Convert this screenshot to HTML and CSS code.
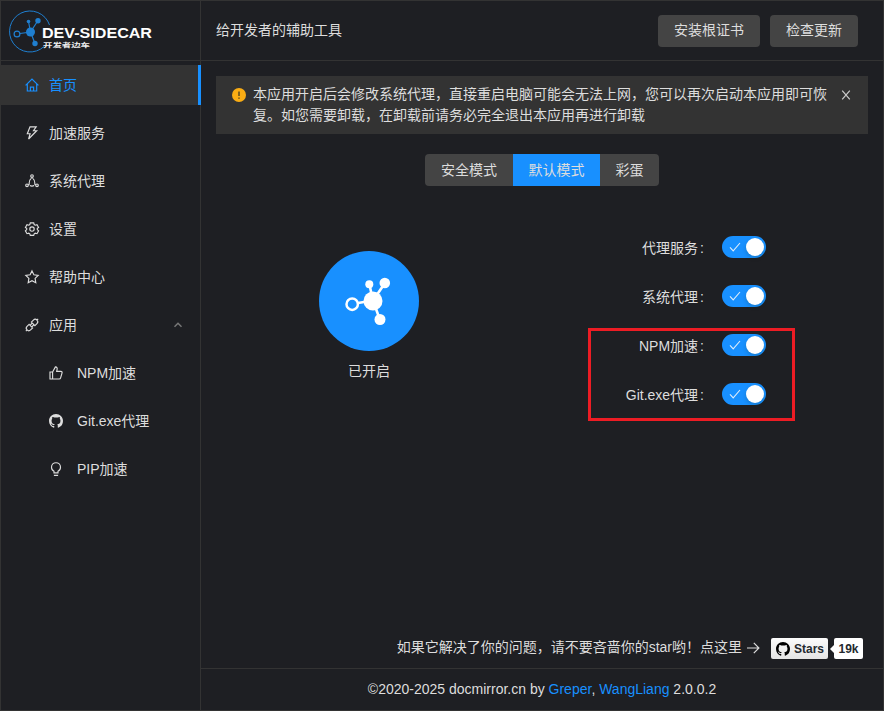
FILE: index.html
```html
<!DOCTYPE html>
<html lang="zh-CN">
<head>
<meta charset="utf-8">
<title>DEV-SIDECAR</title>
<link rel="stylesheet" href="styles.css">
</head>
<body>
<div class="app">
  <aside class="sidebar">
    <div class="brand">
      <svg class="logo" width="150" height="48" viewBox="0 0 150 48">
        <g fill="none" stroke="#1f7fd0">
          <path d="M41.500 18A20.500 20.500 0 1 0 36 39.500" stroke-width="1"/>
          <path d="M12 26.500L22.500 25L20.500 14.500M22.500 25L30 13.500M22.500 25L27 36.500" stroke-width="1.200"/>
          <circle cx="9" cy="27" r="2.900" stroke-width="1.200"/>
        </g>
        <g fill="#1f7fd0">
          <circle cx="22.500" cy="25" r="4.500"/><circle cx="20.500" cy="14.500" r="1.800"/><circle cx="30" cy="13.700" r="2.700"/><circle cx="27" cy="36.500" r="2.700"/>
        </g>
        <text class="logo-name" x="34" y="31" textLength="110" lengthAdjust="spacingAndGlyphs">DEV-SIDECAR</text>
        <text class="logo-sub" x="35" y="40.400" textLength="47" lengthAdjust="spacingAndGlyphs">开发者边车</text>
      </svg>
    </div>
    <nav class="menu">
      <a class="item active"><svg class="icon" viewBox="0 0 14 14"><path d="M.6 7.400L7 1l6.400 6.400M2.300 6v7h9.400V6M5.400 13V9.100h3.200V13"/></svg>首页</a>
      <a class="item"><svg class="icon" viewBox="0 0 14 14"><path d="M5 .8h6.200L8.500 4.700h3.200L3.600 13l1.500-5.300H2.300z"/></svg>加速服务</a>
      <a class="item"><svg class="icon" viewBox="0 0 14 14"><circle cx="7" cy="2" r="1.300"/><circle cx="2" cy="11.300" r="1.300"/><circle cx="12" cy="11.300" r="1.300"/><path d="M7 3.300v1.700M5.900 4.700C4.600 5.900 4.100 7.300 4.100 9.400M8.100 4.700c1.300 1.200 1.800 2.600 1.800 4.700M3.200 10.700l1.600-1M10.800 10.700l-1.600-1M4.800 11.500c1.400.7 3 .7 4.400 0"/></svg>系统代理</a>
      <a class="item"><svg class="icon" viewBox="0 0 14 14"><path d="M5.300.8h3.400l.5 1.800 1 .6 1.800-.5 1.600 2.800L12.300 6.400v1.200l1.300 1.300-1.600 2.800-1.800-.5-1 .6-.5 1.600H5.300l-.5-1.600-1-.6-1.800.5L.4 8.900l1.300-1.300V6.400L.4 5.500 2 2.700l1.800.5 1-.6z"/><circle cx="7" cy="7" r="2.200"/></svg>设置</a>
      <a class="item"><svg class="icon" viewBox="0 0 14 14"><path d="M7 .9l1.900 3.900 4.300.6-3.100 3 .7 4.300L7 10.700l-3.800 2 .7-4.300-3.100-3 4.300-.6z"/></svg>帮助中心</a>
      <a class="item"><svg class="icon" viewBox="0 0 14 14"><g transform="rotate(45 7 7)"><path d="M4.500 5.400V2.500a2.500 2.500 0 0 1 5 0v2.900zM4.500 8.600v2.900a2.500 2.500 0 0 0 5 0V8.600zM7 0v-1.700M7 14v1.700M5.800 5.400v3.200M8.200 5.400v3.200"/></g></svg>应用<svg class="caret" width="10" height="10" viewBox="0 0 10 10"><path d="M1.500 6.700L5 3.300l3.500 3.400"/></svg></a>
      <a class="item sub"><svg class="icon" viewBox="0 0 14 14"><path d="M1 6h2.600v7H1zM3.600 6L6.400.9c1.700 0 2 1.300 1.700 2.500L7.700 5.300h4.100c1.200 0 1.500.9 1.200 1.800l-1.400 4.700c-.2.800-.7 1.200-1.400 1.200H3.600"/></svg>NPM加速</a>
      <a class="item sub"><svg class="icon solid" viewBox="0 0 16 16"><path d="M8 0C3.580 0 0 3.580 0 8c0 3.540 2.290 6.530 5.470 7.590.4.070.55-.17.55-.38 0-.19-.01-.82-.01-1.490-2.010.37-2.530-.49-2.690-.94-.09-.23-.48-.94-.82-1.130-.28-.15-.68-.52-.01-.53.63-.01 1.080.58 1.230.82.72 1.210 1.870.87 2.330.66.070-.52.28-.87.51-1.070-1.780-.2-3.640-.89-3.640-3.950 0-.87.31-1.590.82-2.150-.08-.2-.36-1.020.08-2.120 0 0 .67-.21 2.200.82.64-.18 1.320-.27 2-.27s1.360.09 2 .27c1.530-1.040 2.200-.82 2.200-.82.44 1.100.16 1.920.08 2.120.51.56.82 1.270.82 2.150 0 3.070-1.870 3.750-3.650 3.950.29.25.54.73.54 1.480 0 1.070-.01 1.930-.01 2.200 0 .21.15.46.55.38A8.010 8.010 0 0 0 16 8c0-4.420-3.580-8-8-8z"/></svg>Git.exe代理</a>
      <a class="item sub"><svg class="icon" viewBox="0 0 14 14"><path d="M5 10.800V9.200C3.500 8.500 2.500 7 2.500 5.200a4.500 4.500 0 0 1 9 0C11.500 7 10.500 8.500 9 9.200v1.600zM4.900 13.300h4.200"/></svg>PIP加速</a>
    </nav>
  </aside>
  <div class="page">
    <header class="header">
      <span class="title">给开发者的辅助工具</span>
      <button class="btn">安装根证书</button>
      <button class="btn">检查更新</button>
    </header>
    <main class="main">
      <div class="alert">
        <svg class="warn" width="14" height="14" viewBox="0 0 14 14"><circle cx="7" cy="7" r="7" fill="#faad14"/><path d="M7 3.400v4.500M7 9.400v1.400" stroke="#5a4a22" stroke-width="1.500"/></svg>
        <p class="alert-text">本应用开启后会修改系统代理，直接重启电脑可能会无法上网，您可以再次启动本应用即可恢复。如您需要卸载，在卸载前请务必完全退出本应用再进行卸载</p>
        <svg class="close" width="10" height="10" viewBox="0 0 10 10"><path d="M1.200.6l7.600 8.800M8.800.6L1.200 9.400"/></svg>
      </div>
      <div class="modes">
        <button class="mode">安全模式</button><button class="mode on">默认模式</button><button class="mode">彩蛋</button>
      </div>
      <div class="panel">
        <div class="status">
          <svg width="100" height="100" viewBox="0 0 100 100">
            <circle cx="50" cy="50" r="50" fill="#1890ff"/>
            <g stroke="#fff" stroke-width="2.600" fill="none"><path d="M39 52L54 49.500L50.300 33M54 49.500L66 32M54 49.500L61 69"/><circle cx="33.200" cy="53.200" r="5.700" stroke-width="2.500"/></g>
            <g fill="#fff"><circle cx="54" cy="50" r="9.500"/><circle cx="50.300" cy="33.200" r="4"/><circle cx="65.800" cy="32" r="5.300"/><circle cx="61" cy="68.500" r="5.500"/></g>
          </svg>
          <span>已开启</span>
        </div>
        <div class="form">
          <div class="row"><span class="label">代理服务<i>:</i></span><span class="switch"><svg class="check" viewBox="0 0 12 12"><path d="M1 6.300l3.200 3.500L11 2"/></svg><b></b></span></div>
          <div class="row"><span class="label">系统代理<i>:</i></span><span class="switch"><svg class="check" viewBox="0 0 12 12"><path d="M1 6.300l3.200 3.500L11 2"/></svg><b></b></span></div>
          <div class="row"><span class="label">NPM加速<i>:</i></span><span class="switch"><svg class="check" viewBox="0 0 12 12"><path d="M1 6.300l3.200 3.500L11 2"/></svg><b></b></span></div>
          <div class="row"><span class="label">Git.exe代理<i>:</i></span><span class="switch"><svg class="check" viewBox="0 0 12 12"><path d="M1 6.300l3.200 3.500L11 2"/></svg><b></b></span></div>
          <div class="highlight"></div>
        </div>
      </div>
      <div class="star">
        <span class="star-text">如果它解决了你的问题，请不要吝啬你的star哟！点这里</span>
        <svg class="arrow" width="14" height="14" viewBox="0 0 14 14"><path d="M1 7h11.500M7.800 1.800L12.900 7l-5.100 5.200"/></svg>
        <span class="gh"><svg width="14" height="14" viewBox="0 0 16 16"><path d="M8 0C3.580 0 0 3.580 0 8c0 3.540 2.290 6.530 5.470 7.590.4.070.55-.17.55-.38 0-.19-.01-.82-.01-1.490-2.010.37-2.530-.49-2.690-.94-.09-.23-.48-.94-.82-1.130-.28-.15-.68-.52-.01-.53.63-.01 1.080.58 1.230.82.72 1.210 1.870.87 2.330.66.070-.52.28-.87.51-1.070-1.780-.2-3.640-.89-3.640-3.950 0-.87.31-1.590.82-2.150-.08-.2-.36-1.020.08-2.120 0 0 .67-.21 2.200.82.64-.18 1.320-.27 2-.27s1.360.09 2 .27c1.530-1.040 2.200-.82 2.200-.82.44 1.100.16 1.920.08 2.120.51.56.82 1.270.82 2.150 0 3.070-1.870 3.750-3.650 3.950.29.25.54.73.54 1.480 0 1.070-.01 1.930-.01 2.200 0 .21.15.46.55.38A8.010 8.010 0 0 0 16 8c0-4.420-3.580-8-8-8z"/></svg><span class="gh-text">Stars</span></span>
        <span class="tip"></span><span class="count">19k</span>
      </div>
    </main>
    <footer class="footer"><span>©2020-2025 docmirror.cn by <a>Greper</a>, <a>WangLiang</a> 2.0.0.2</span></footer>
  </div>
</div>
</body>
</html>
```
FILE: styles.css
```css
* { box-sizing: border-box; }
body {
  margin: 0;
  background: #1e1f23;
  color: #ddd;
  font: 14px/21px "Liberation Sans", "Noto Sans CJK SC", sans-serif;
}
.app {
  display: flex;
  width: 884px;
  height: 711px;
  border: 1px solid #333;
}
.sidebar { width: 200px; flex: none; border-right: 1px solid #333; }
.brand { height: 60px; border-bottom: 1px solid #333; padding: 6px 0 0 7px; }
.logo { display: block; }
.logo-name { font: bold 14px "Liberation Sans", sans-serif; fill: #fff; }
.logo-sub { font: bold 6px "Noto Sans CJK SC", sans-serif; fill: #eee; }
.menu { display: flex; flex-direction: column; gap: 8px; margin: 4px -1px 0 0; }
.item { height: 40px; display: flex; align-items: center; gap: 10px; padding: 0 18px 0 24px; }
.item.active { background: #333; color: #1890ff; border-right: 3px solid #1890ff; }
.item.sub { padding-left: 48px; gap: 14px; }
.icon { width: 14px; height: 14px; flex: none; fill: none; stroke: currentColor; stroke-width: 1.15; overflow: visible; }
.icon.solid { fill: currentColor; stroke: none; }
.caret { margin-left: auto; fill: none; stroke: #777; stroke-width: 1.5; }
.page { flex: 1; display: flex; flex-direction: column; min-width: 0; }
.header { height: 60px; border-bottom: 1px solid #333; display: flex; align-items: center; gap: 10px; padding: 0 25px 0 15px; }
.title { margin-right: auto; }
.btn, .mode { font: inherit; color: #ddd; background: #444; border: 0; height: 32px; padding: 0; }
.btn { border-radius: 4px; padding: 0 16px; }
.main { flex: 1; padding: 15px 15px 8px; display: flex; flex-direction: column; }
.alert { height: 58px; background: #333; display: flex; padding: 8px 17px 8px 16px; }
.warn { flex: none; margin-top: 4px; }
.alert-text { margin: 0 0 0 7px; width: 576px; }
.close { flex: none; margin: 6px 0 0 auto; fill: none; stroke: #ccc; stroke-width: 1.2; }
.modes { display: flex; align-self: center; margin: 20px 0 0; }
.mode { width: 88px; }
.mode:first-child { border-radius: 4px 0 0 4px; }
.mode:last-child { border-radius: 0 4px 4px 0; width: 59px; }
.mode.on { background: #1890ff; width: 87px; }
.panel { display: flex; margin-top: 50px; }
.status { width: 306px; padding-top: 15px; display: flex; flex-direction: column; align-items: center; gap: 10px; }
.form { position: relative; width: 244px; display: flex; flex-direction: column; gap: 27px; }
.row { height: 22px; display: flex; align-items: center; justify-content: flex-end; gap: 18px; }
.label { padding-top: 2px; }
.label i { font-style: normal; margin-left: 2px; }
.switch { width: 44px; height: 22px; border-radius: 11px; background: #1890ff; display: flex; align-items: center; padding: 0 2px 0 7px; justify-content: space-between; }
.switch b { width: 18px; height: 18px; border-radius: 50%; background: #fff; box-shadow: 0 2px 4px rgba(0, 35, 11, .2); }
.check { width: 12px; height: 12px; fill: none; stroke: #dcebfa; stroke-width: 1.1; }
.highlight { position: absolute; left: 66px; top: 92px; width: 207px; height: 93px; border: 3px solid #ed1c24; }
.star { margin: auto 5px 0 0; display: flex; justify-content: flex-end; align-items: center; }
.star-text { padding-bottom: 2px; }
.arrow { margin: 0 11px 2px 4px; fill: none; stroke: #ddd; stroke-width: 1.2; }
.gh, .count { height: 21px; border-radius: 2px; font: bold 12px/22px "Liberation Sans", sans-serif; color: #24292f; display: flex; align-items: center; justify-content: center; }
.gh { width: 57px; gap: 4px; background: linear-gradient(#fcfcfc, #e4e4e4); }
.gh-text { padding-top: 1px; width: 29px; white-space: nowrap; }
.tip { width: 0; border: 4px solid transparent; border-left: 0; border-right-color: #fff; margin-left: 2px; }
.count { width: 29px; background: #fff; }
.footer { height: 42px; border-top: 1px solid #333; display: flex; align-items: center; justify-content: center; }
.footer a { color: #1890ff; }
```
